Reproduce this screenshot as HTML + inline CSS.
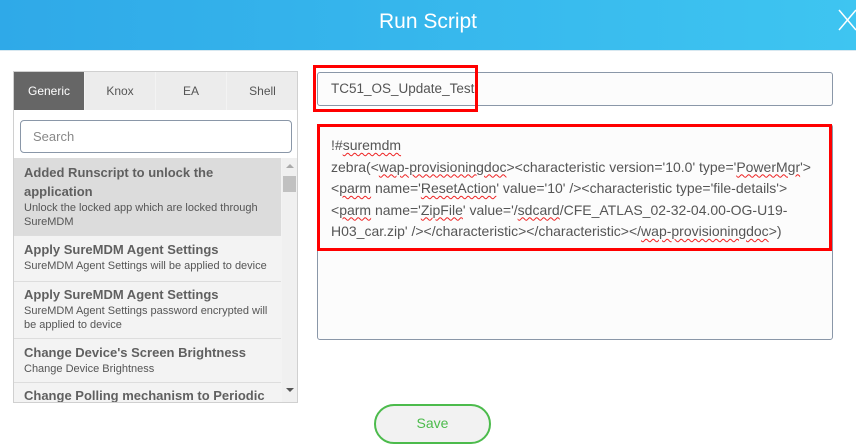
<!DOCTYPE html>
<html><head><style>
body{margin:0;width:856px;height:433px;overflow:hidden;background:#fff;font-family:"Liberation Sans",Arial,sans-serif;position:relative}
.hdr{position:absolute;left:0;top:0;width:856px;height:50px;background:linear-gradient(90deg,#2fa9e8,#3ec5f1);border-bottom:1px solid #d8e8f0}
.hdr span{position:absolute;left:0;width:856px;top:10px;text-align:center;color:#fff;font-size:21px}
.abs{position:absolute}
.panel{left:13px;top:71px;width:283px;height:330px;border:1px solid #d0d0d0;background:#f3f3f3;overflow:hidden}
.tab{top:0;height:38px;line-height:38px;text-align:center;font-size:12px;color:#555;background:#ececec}
.item{left:0;width:267px;border-bottom:1px solid #ddd;padding-left:10px;box-sizing:border-box;color:#555}
.item b{display:block;font-size:13px;line-height:19px;color:#606060}
.item i{font-style:normal;display:block;font-size:11px;line-height:14px;color:#555}
.ta{border:1px solid #8a97a8;border-radius:3px;background:#fcfcfc}
.red{border:3px solid #f00;box-sizing:border-box}
.code{left:331px;top:135px;width:495px;font-size:14px;line-height:21.5px;color:#555;white-space:nowrap}
u{text-decoration:underline wavy #e22;text-decoration-thickness:1px;text-underline-offset:2px}
</style></head><body>
<div class="hdr"><span>Run Script</span></div>
<svg class="abs" style="left:836px;top:8px" width="20" height="28"><path d="M3 2L20 22M20 2L3 22" stroke="#fff" stroke-width="1.5" fill="none"/></svg>
<div class="abs panel">
<div class="abs tab" style="left:0;width:70px;background:#666;color:#fff">Generic</div>
<div class="abs" style="left:27px;top:38px;width:0;height:0;border-left:8px solid transparent;border-right:8px solid transparent;border-top:8px solid #666"></div>
<div class="abs tab" style="left:71px;width:70px">Knox</div>
<div class="abs tab" style="left:142px;width:70px">EA</div>
<div class="abs tab" style="left:213px;width:71px">Shell</div>
<div class="abs" style="left:0;top:38px;width:284px;height:48px;background:#fff"></div>
<div class="abs ta" style="left:6px;top:48px;width:270px;height:31px;border-radius:4px;background:#fff"><span style="position:absolute;left:12px;top:8px;font-size:13px;color:#888">Search</span></div>
<div class="abs item" style="top:86px;height:78px;background:#dcdcdc;padding-top:5px"><b>Added Runscript to unlock the application</b><i>Unlock the locked app which are locked through SureMDM</i></div>
<div class="abs item" style="top:164px;height:46px;padding-top:4px"><b>Apply SureMDM Agent Settings</b><i>SureMDM Agent Settings will be applied to device</i></div>
<div class="abs item" style="top:210px;height:57px;padding-top:3px"><b>Apply SureMDM Agent Settings</b><i>SureMDM Agent Settings password encrypted will be applied to device</i></div>
<div class="abs item" style="top:267px;height:44px;padding-top:4px"><b>Change Device's Screen Brightness</b><i>Change Device Brightness</i></div>
<div class="abs item" style="top:311px;height:30px;padding-top:3px;border:0"><b>Change Polling mechanism to Periodic</b></div>
<div class="abs" style="left:268px;top:86px;width:16px;height:244px;background:#f0f0f0"></div>
<div class="abs" style="left:269px;top:104px;width:13px;height:16px;background:#c1c1c1"></div>
<div class="abs" style="left:272px;top:92px;border-left:4px solid transparent;border-right:4px solid transparent;border-bottom:4px solid #aaa;width:0;height:0"></div>
<div class="abs" style="left:272px;top:316px;border-left:4px solid transparent;border-right:4px solid transparent;border-top:4px solid #555;width:0;height:0"></div>
</div>
<div class="abs ta" style="left:317px;top:72px;width:514px;height:32px"></div>
<div class="abs red" style="left:313px;top:65px;width:165px;height:47px"></div>
<div class="abs" style="left:331px;top:81px;font-size:13.5px;color:#555">TC51_OS_Update_Test</div>
<div class="abs ta" style="left:317px;top:124px;width:514px;height:214px"></div>
<div class="abs red" style="left:317px;top:124px;width:515px;height:127px"></div>
<div class="abs code">!#<u>suremdm</u><br>zebra(&lt;<u>wap-provisioningdoc</u>&gt;&lt;characteristic version='10.0' type='<u>PowerMgr</u>'&gt;<br>&lt;<u>parm</u> name='<u>ResetAction</u>' value='10' /&gt;&lt;characteristic type='file-details'&gt;<br>&lt;<u>parm</u> name='<u>ZipFile</u>' value='/<u>sdcard</u>/CFE_ATLAS_02-32-04.00-OG-U19-<br>H03_car.zip' /&gt;&lt;/characteristic&gt;&lt;/characteristic&gt;&lt;/<u>wap-provisioningdoc</u>&gt;)</div>
<div class="abs" style="left:374px;top:404px;width:117px;height:40px;border:2px solid #4cbb4c;border-radius:20px;background:#f2f2f2;box-sizing:border-box;text-align:center;line-height:34px;color:#4cbb4c;font-size:14px">Save</div>
</body></html>
